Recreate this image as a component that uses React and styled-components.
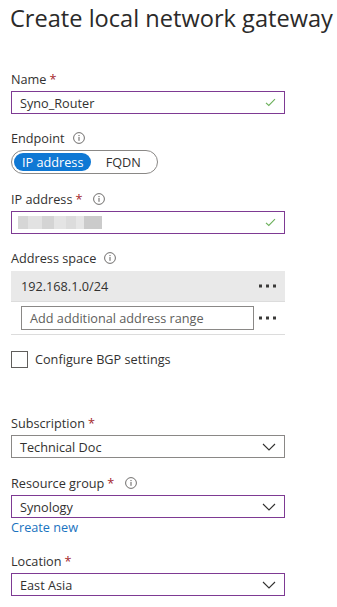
import React from "react";
import styled, { createGlobalStyle } from "styled-components";

const Global = createGlobalStyle`
  html, body { margin: 0; padding: 0; background: #fff; }
  body { font-family: "Open Sans", "Noto Sans", sans-serif; color: #323130; }
`;

const Page = styled.div`
  width: 337px;
  height: 607px;
  overflow: hidden;
  padding: 0 0 0 11px;
  box-sizing: border-box;
  display: flex;
  flex-direction: column;
`;

const Title = styled.h1`
  margin: 2px 0 0 -1px;
  font-size: 23.6px;
  line-height: 32px;
  font-weight: 400;
  color: #2b2a29;
  white-space: nowrap;
`;

const Field = styled.div`
  display: flex;
  flex-direction: column;
  width: 274px;
  margin-top: ${(p) => p.$mt}px;
`;

const Label = styled.div`
  display: flex;
  align-items: center;
  font-size: 12.7px;
  line-height: 18px;
  height: 18px;
  margin-bottom: 3px;
  white-space: nowrap;
`;

const Star = styled.span`
  color: #a4262c;
  margin-left: 3px;
`;

const InfoWrap = styled.span`
  display: inline-flex;
  margin-left: ${(p) => p.$ml || 8}px;
`;

const Info = ({ ml }) => (
  <InfoWrap $ml={ml}>
    <svg width="12" height="12" viewBox="0 0 12 12">
      <circle cx="6" cy="6" r="5.4" fill="none" stroke="#605e5c" strokeWidth="0.9" />
      <circle cx="6" cy="3.6" r="0.7" fill="#605e5c" />
      <rect x="5.5" y="5" width="1" height="3.8" fill="#605e5c" />
    </svg>
  </InfoWrap>
);

const Box = styled.div`
  box-sizing: border-box;
  height: ${(p) => p.$h || 23}px;
  width: ${(p) => p.$w || 274}px;
  border: 1px solid ${(p) => (p.$active ? "#7e3a93" : "#8a8886")};
  display: flex;
  align-items: center;
  justify-content: space-between;
  padding: 0 8px 0 8px;
  font-size: 12.7px;
  white-space: nowrap;
  color: ${(p) => (p.$placeholder ? "#605e5c" : "#323130")};
`;

const Check = () => (
  <svg width="11" height="9" viewBox="0 0 11 9">
    <path d="M1 4.8 L3.8 7.4 L10 1.2" fill="none" stroke="#6bb05a" strokeWidth="1.1" />
  </svg>
);

const Chevron = () => (
  <svg width="14" height="8" viewBox="0 0 14 8">
    <path d="M1 1 L7 7 L13 1" fill="none" stroke="#323130" strokeWidth="1.1" />
  </svg>
);

const Blur = styled.div`
  display: flex;
  height: 13px;
  margin-left: -2px;
`;

const BlurCell = styled.div`
  width: ${(p) => p.$w}px;
  height: 100%;
  background: ${(p) => p.$c};
  filter: blur(0.6px);
`;

const Toggle = styled.div`
  box-sizing: border-box;
  width: 147px;
  height: 24px;
  border: 1px solid #8a8886;
  border-radius: 12px;
  display: flex;
  align-items: center;
  padding: 0 2px;
  font-size: 12.7px;
`;

const Pill = styled.div`
  height: 18px;
  border-radius: 9px;
  display: flex;
  align-items: center;
  justify-content: center;
  white-space: nowrap;
  width: ${(p) => p.$w}px;
  box-sizing: border-box;
  background: ${(p) => (p.$on ? "#0f78d4" : "transparent")};
  color: ${(p) => (p.$on ? "#fff" : "#323130")};
`;

const Row = styled.div`
  box-sizing: border-box;
  height: ${(p) => p.$h}px;
  display: flex;
  align-items: center;
  justify-content: space-between;
  padding: 0 9px 0 10px;
  background: ${(p) => p.$bg || "transparent"};
  border-bottom: 1px solid #dcdcdc;
  font-size: 12.7px;
  margin-top: ${(p) => p.$mt || 0}px;
`;

const Dots = () => (
  <svg width="17" height="4" viewBox="0 0 17 4">
    <rect x="0" y="0.5" width="3" height="3" fill="#3b3a39" />
    <rect x="7" y="0.5" width="3" height="3" fill="#3b3a39" />
    <rect x="14" y="0.5" width="3" height="3" fill="#3b3a39" />
  </svg>
);

const CheckRow = styled.div`
  display: flex;
  align-items: center;
  margin-top: ${(p) => p.$mt}px;
  font-size: 12.7px;
  gap: 7px;
`;

const CheckSquare = styled.div`
  box-sizing: border-box;
  width: 17px;
  height: 17px;
  border: 1px solid #605e5c;
`;

const Link = styled.a`
  font-size: 12.7px;
  line-height: 18px;
  color: #1a73c0;
  text-decoration: none;
`;

export default function App() {
  return (
    <Page>
      <Global />
      <Title>Create local network gateway</Title>

      <Field $mt={36}>
        <Label>
          Name<Star>*</Star>
        </Label>
        <Box $active>
          Syno_Router
          <Check />
        </Box>
      </Field>

      <Field $mt={15}>
        <Label>
          Endpoint
          <Info />
        </Label>
        <Toggle>
          <Pill $on $w={78}>IP address</Pill>
          <Pill $w={64}>FQDN</Pill>
        </Toggle>
      </Field>

      <Field $mt={16}>
        <Label>
          IP address<Star>*</Star>
          <Info ml={11} />
        </Label>
        <Box $active>
          <Blur>
            <BlurCell $w={10} $c="#d6d6d6" />
            <BlurCell $w={14} $c="#e2e2e2" />
            <BlurCell $w={12} $c="#d4d4d4" />
            <BlurCell $w={12} $c="#e4e4e4" />
            <BlurCell $w={10} $c="#dcdcdc" />
            <BlurCell $w={8} $c="#e6e6e6" />
            <BlurCell $w={18} $c="#cbcbcb" />
          </Blur>
          <Check />
        </Box>
      </Field>

      <Field $mt={15}>
        <Label>
          Address space
          <Info />
        </Label>
        <Row $h={31} $bg="#e9e9e9" $mt={1}>
          192.168.1.0/24
          <Dots />
        </Row>
        <Row $h={33}>
          <Box $w={233} $h={24} $placeholder>
            Add additional address range
          </Box>
          <Dots />
        </Row>
      </Field>

      <CheckRow $mt={15}>
        <CheckSquare />
        Configure BGP settings
      </CheckRow>

      <Field $mt={46}>
        <Label>
          Subscription<Star>*</Star>
        </Label>
        <Box>
          Technical Doc
          <Chevron />
        </Box>
      </Field>

      <Field $mt={16}>
        <Label>
          Resource group<Star>*</Star>
          <Info ml={11} />
        </Label>
        <Box $active>
          Synology
          <Chevron />
        </Box>
        <Link href="#">Create new</Link>
      </Field>

      <Field $mt={16}>
        <Label>
          Location<Star>*</Star>
        </Label>
        <Box $active>
          East Asia
          <Chevron />
        </Box>
      </Field>
    </Page>
  );
}
